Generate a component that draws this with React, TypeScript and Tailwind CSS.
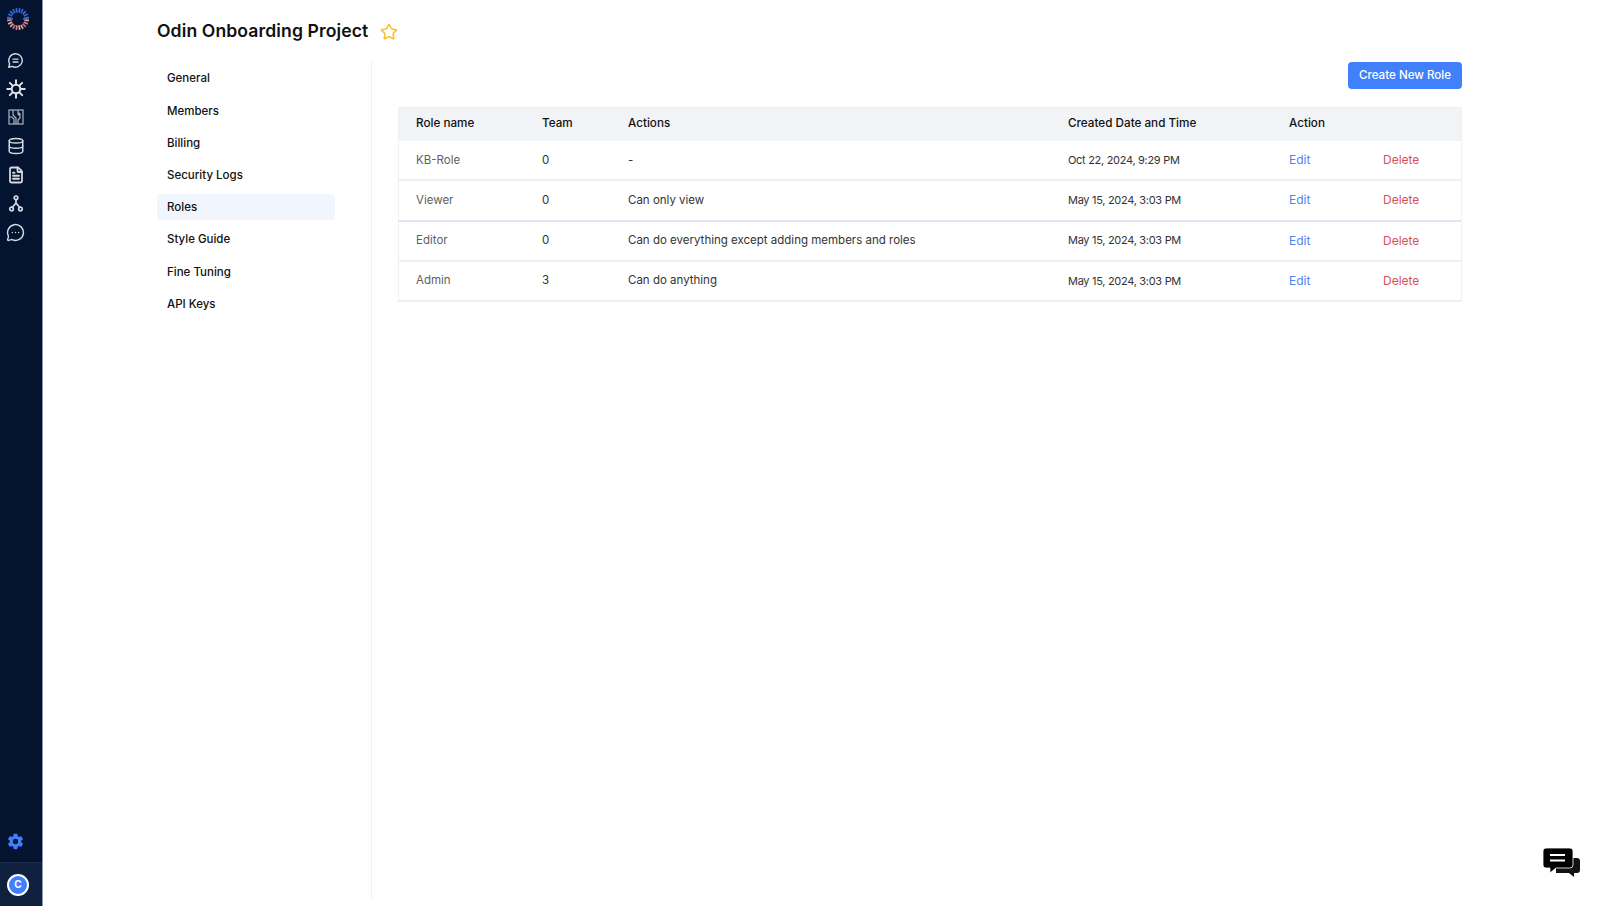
import { Database, FileText, MessageCircleMore, Star } from "lucide-react";
import { IoSettingsSharp } from "react-icons/io5";

const navItems = ["General", "Members", "Billing", "Security Logs", "Roles", "Style Guide", "Fine Tuning", "API Keys"];

const roles = [
  { name: "KB-Role", team: "0", actions: "-", created: "Oct 22, 2024, 9:29 PM", border: "border-[#eef0f5]" },
  { name: "Viewer", team: "0", actions: "Can only view", created: "May 15, 2024, 3:03 PM", border: "border-[#e2e6f0]" },
  { name: "Editor", team: "0", actions: "Can do everything except adding members and roles", created: "May 15, 2024, 3:03 PM", border: "border-[#eef0f5]" },
  { name: "Admin", team: "3", actions: "Can do anything", created: "May 15, 2024, 3:03 PM", border: "border-[#eef0f5]" },
];

const gridCols = "grid grid-cols-[126px_86px_440px_221px_94px_1fr] items-center pl-[17px]";

function Logo() {
  const rays = [];
  for (let i = 0; i < 20; i++) {
    const a = (i / 20) * Math.PI * 2 + Math.PI / 20;
    const top = Math.sin(a) < 0;
    const colors = ["#f0b877", "#e67f9c", "#c7689f", "#e8a07e"];
    rays.push(
      <line
        key={i}
        x1={12 + Math.cos(a) * 6.5}
        y1={12 + Math.sin(a) * 6.5}
        x2={12 + Math.cos(a) * 11}
        y2={12 + Math.sin(a) * 11}
        stroke={top ? "#3569d8" : colors[i % 4]}
        strokeWidth="1.7"
      />
    );
  }
  return (
    <svg width="24" height="24" viewBox="0 0 24 24">
      {rays}
      <path d="M1 12h6M17 12h6" stroke="#3f7be8" strokeWidth="1.3" />
    </svg>
  );
}

function ChatLines() {
  return (
    <svg width="17" height="17" viewBox="0 0 24 24" fill="none" stroke="#d5d9e2" strokeWidth="2" strokeLinecap="round" strokeLinejoin="round">
      <path d="M12 2.500a9.500 9.500 0 1 1-4.600 17.800L2.500 21.500l1.200-4.900A9.500 9.500 0 0 1 12 2.500z" />
      <path d="M8.500 10h7M8.500 14h7" />
    </svg>
  );
}

function SunIcon() {
  return (
    <svg width="20" height="20" viewBox="0 0 24 24" fill="none" stroke="#dfe2e8" strokeWidth="2.400" strokeLinecap="round">
      <circle cx="12" cy="12" r="5.200" />
      <path d="M12 1.500v4M12 18.500v4M1.500 12h4M18.500 12h4M4.600 4.600l2.800 2.800M16.600 16.600l2.800 2.800M4.600 19.400l2.800-2.800M16.600 7.400l2.800-2.800" />
    </svg>
  );
}

function BoardIcon() {
  return (
    <svg width="16" height="16" viewBox="0 0 16 16" fill="none" stroke="#aeb4c2" strokeWidth="1.200">
      <rect x="1" y="1" width="14" height="14" />
      <path d="M5 1v5l3 3v6M1 8h3l2 2v5M10 1v3l2 2v3l-2 2v4" />
      <circle cx="11" cy="5" r="1" />
    </svg>
  );
}

function ForkIcon() {
  return (
    <svg width="14" height="17" viewBox="0 0 14 17" fill="none" stroke="#d5d9e2" strokeWidth="1.700">
      <circle cx="7" cy="2.800" r="1.800" />
      <circle cx="2.500" cy="14" r="1.800" />
      <circle cx="11.500" cy="14" r="1.800" />
      <path d="M7 4.600v3.400M7 8L3.500 12.300M7 8l3.500 4.300" />
    </svg>
  );
}

export default function App() {
  return (
    <div className="flex h-screen bg-white overflow-hidden font-['Inter',sans-serif] text-[#111]">
      <aside className="w-[43px] shrink-0 h-full bg-[#04132f] border-r border-[#8d96aa] flex flex-col">
        <div className="h-[38px] pt-[7px] pl-[6px]">
          <Logo />
        </div>
        <div className="mt-[12px] flex flex-col items-center gap-[8.7px] w-[31px] text-[#d5d9e2]">
          <div className="h-[20px] flex items-center"><ChatLines /></div>
          <div className="h-[20px] flex items-center"><SunIcon /></div>
          <div className="h-[20px] flex items-center"><BoardIcon /></div>
          <div className="h-[20px] flex items-center"><Database size={18} strokeWidth={2} /></div>
          <div className="h-[20px] flex items-center"><FileText size={18} strokeWidth={2.4} /></div>
          <div className="h-[20px] flex items-center"><ForkIcon /></div>
          <div className="h-[20px] flex items-center"><MessageCircleMore size={19} strokeWidth={1.8} /></div>
        </div>
        <div className="mt-auto h-[43px] flex items-center pl-[7px] border-b border-[#1a2a48]">
          <IoSettingsSharp size={17} color="#4080f8" />
        </div>
        <div className="h-[43px] bg-[#10213f] flex items-center pl-[7px]">
          <div className="w-[22px] h-[22px] rounded-full bg-[#3f80ff] border-2 border-white flex items-center justify-center text-white text-[10px] font-bold">
            C
          </div>
        </div>
      </aside>

      <main className="flex-1 pl-[114px] pr-[138px] flex flex-col min-w-0">
        <div className="h-[62px] flex items-center pt-[1px]">
          <h1 className="text-[17.6px] font-semibold tracking-[0.1px]">Odin Onboarding Project</h1>
          <Star size={18} className="ml-[12px] text-[#fbbf24]" strokeWidth={2} />
        </div>

        <div className="flex flex-1 min-h-0 pb-[6px]">
          <nav className="w-[215px] shrink-0 border-r border-[#eef0f4] flex flex-col pt-[3px]">
            {navItems.map((item) => (
              <div
                key={item}
                className={`w-[178px] h-[26px] mb-[6.2px] pl-[10px] pt-[2px] flex items-center text-[11.5px] font-medium rounded-[4px] ${
                  item === "Roles" ? "bg-[#f0f5fe]" : ""
                }`}
              >
                {item}
              </div>
            ))}
          </nav>

          <section className="flex-1 pl-[26px] min-w-0">
            <div className="flex justify-end">
              <button className="w-[114px] h-[27px] rounded-[4px] bg-[#4080fb] text-white text-[11.6px] font-medium">
                Create New Role
              </button>
            </div>
            <div className="mt-[18px] border border-[#eef0f5] border-b-0">
              <div className={`${gridCols} h-[33px] pb-[1px] bg-[#f2f3f7] text-[11.7px] font-medium`}>
                <div>Role name</div>
                <div>Team</div>
                <div>Actions</div>
                <div>Created Date and Time</div>
                <div>Action</div>
                <div></div>
              </div>
              {roles.map((role) => (
                <div key={role.name} className={`${gridCols} h-[40.3px] border-b-2 ${role.border} text-[11.5px] text-[#333]`}>
                  <div className="text-[#5f5f5f]">{role.name}</div>
                  <div>{role.team}</div>
                  <div>{role.actions}</div>
                  <div className="text-[11px] tracking-[-0.3px]">{role.created}</div>
                  <div className="text-[#4b86f5] text-[12px]">Edit</div>
                  <div className="text-[#d6515b] text-[12px]">Delete</div>
                </div>
              ))}
            </div>
          </section>
        </div>
      </main>

      <div className="fixed left-[1543px] top-[848px]">
        <svg width="37" height="29" viewBox="0 0 37 29">
          <path d="M13 10h21a3 3 0 0 1 3 3v9a3 3 0 0 1-3 3h-3v4l-5-4H13z" fill="#111" />
          <path d="M3 0h24a3 3 0 0 1 3 3v14a3 3 0 0 1-3 3H13l-6 5v-5H3a3 3 0 0 1-3-3V3a3 3 0 0 1 3-3z" fill="#000" stroke="#fff" strokeWidth="0.8" />
          <path d="M7 7h15M7 12.500h15" stroke="#fff" strokeWidth="2" />
        </svg>
      </div>
    </div>
  );
}
